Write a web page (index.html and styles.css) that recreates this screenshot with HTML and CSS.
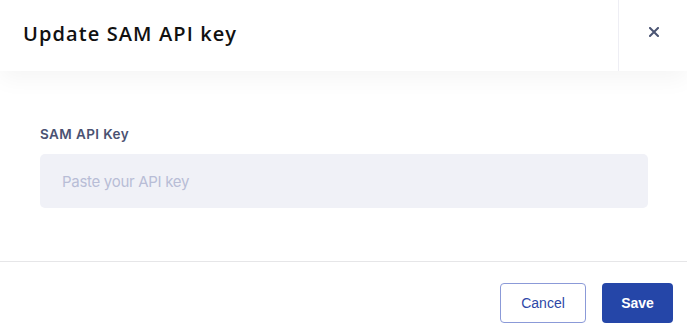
FILE: index.html
```html
<!DOCTYPE html>
<html>
<head>
<meta charset="utf-8">
<link rel="stylesheet" href="styles.css">
</head>
<body>
<div class="modal">
  <header class="head">
    <h1 class="title">Update SAM API key</h1>
    <button class="close" aria-label="Close">
      <svg width="10" height="10" viewBox="0 0 10 10"><path d="M1 1L9 9M9 1L1 9" stroke="#4b5573" stroke-width="2" stroke-linecap="square"/></svg>
    </button>
  </header>
  <main class="body">
    <label class="label">SAM API Key</label>
    <div class="input">Paste your API key</div>
  </main>
  <footer class="foot">
    <button class="btn cancel">Cancel</button>
    <button class="btn save">Save</button>
  </footer>
</div>
</body>
</html>
```
FILE: styles.css
```css
html, body { margin: 0; padding: 0; background: #fff; }
body { width: 687px; height: 332px; overflow: hidden; font-family: "Inter", "Liberation Sans", sans-serif; }
.modal { display: flex; flex-direction: column; height: 332px; }
.head { height: 71px; display: flex; align-items: stretch; position: relative; z-index: 1; box-shadow: 0 8px 22px rgba(0,0,0,0.045); background: #fff; }
.title { flex: 1; margin: 0; padding-left: 23px; display: flex; align-items: center; font-family: "Open Sans", sans-serif; font-weight: 600; font-size: 20px; color: #111; letter-spacing: 1.1px; padding-bottom: 4px; }
.close { width: 69px; border: 0; border-left: 1px solid #eeeef4; background: #fff; display: flex; align-items: center; justify-content: center; padding: 0 0 8px 2px; cursor: pointer; }
.body { flex: 0 0 191px; box-sizing: border-box; padding: 55px 39px 0 40px; border-bottom: 1px solid #e6e6e8; display: flex; flex-direction: column; }
.label { font-family: "Inter", sans-serif; font-size: 13.5px; font-weight: 600; color: #4a5272; line-height: 16px; margin-bottom: 12px; letter-spacing: 0.4px; }
.input { height: 54px; background: #f0f1f7; border-radius: 5px; padding-left: 22px; display: flex; align-items: center; font-size: 15px; color: #b8bdd6; letter-spacing: -0.3px; }
.foot { display: flex; justify-content: flex-end; gap: 16px; padding: 21px 14px 0 0; }
.btn { height: 40px; border-radius: 4px; font-family: "Liberation Sans", Arial, sans-serif; font-size: 14px; cursor: pointer; }
.cancel { width: 86px; background: #fff; border: 1px solid #8b9ad8; color: #2d47a7; }
.save { width: 71px; background: #2546a8; border: 0; color: #fff; font-weight: 700; }
```
